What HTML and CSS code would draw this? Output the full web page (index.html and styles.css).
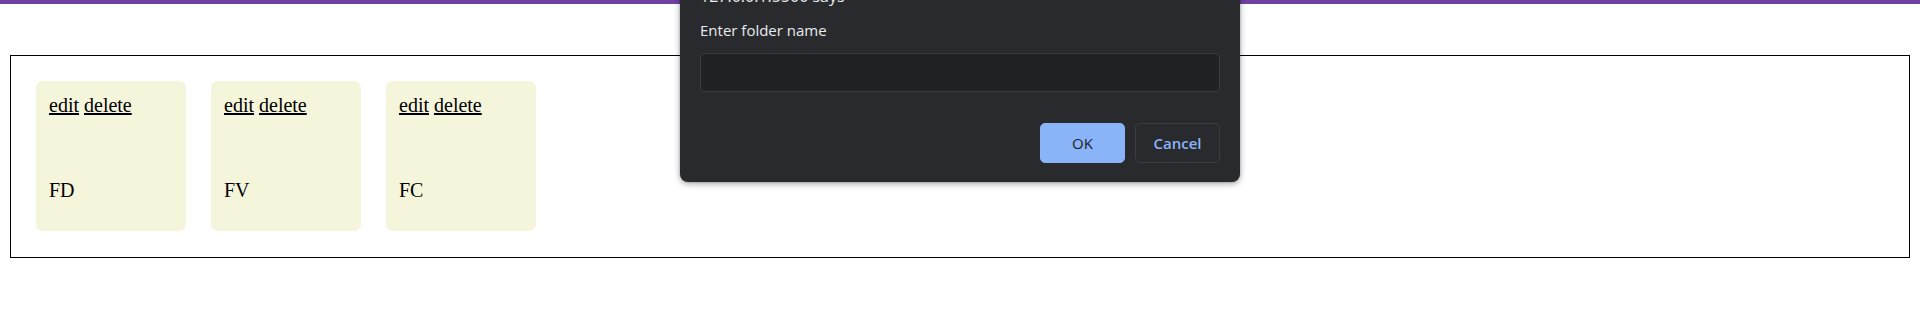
FILE: index.html
```html
<!DOCTYPE html>
<html>
<head>
<meta charset="utf-8">
<link rel="stylesheet" href="styles.css">
</head>
<body>
<div class="topbar"></div>
<div class="folders">
  <div class="card">
    <div class="actions"><a href="#">edit</a> <a href="#">delete</a></div>
    <div class="name">FD</div>
  </div>
  <div class="card">
    <div class="actions"><a href="#">edit</a> <a href="#">delete</a></div>
    <div class="name">FV</div>
  </div>
  <div class="card">
    <div class="actions"><a href="#">edit</a> <a href="#">delete</a></div>
    <div class="name">FC</div>
  </div>
</div>
<div class="dialog">
  <div class="dialog-title">127.0.0.1:5500 says</div>
  <div class="dialog-label">Enter folder name</div>
  <div class="dialog-input"></div>
  <div class="dialog-buttons">
    <button class="btn btn-ok">OK</button>
    <button class="btn btn-cancel">Cancel</button>
  </div>
</div>
</body>
</html>
```
FILE: styles.css
```css
html, body {
  margin: 0;
  padding: 0;
  background: #ffffff;
}
body {
  font-family: "Liberation Serif", "Times New Roman", serif;
  font-size: 20px;
  color: #000;
  position: relative;
  height: 311px;
  overflow: hidden;
}
.topbar {
  height: 4px;
  background: #6f42a1;
}
.folders {
  margin: 51px 10px 0;
  border: 1px solid #000;
  padding: 25px 25px 26px;
  display: flex;
  gap: 25px;
}
.card {
  width: 150px;
  height: 150px;
  box-sizing: border-box;
  padding: 13px 13px 12px;
  background: #f5f5dc;
  border-radius: 7px;
}
.actions a {
  color: #000;
  text-decoration: underline;
}
.name {
  margin-top: 62px;
}
.dialog {
  position: absolute;
  left: 680px;
  top: -34px;
  width: 560px;
  box-sizing: border-box;
  padding: 20px 20px 19px;
  background: #292a2d;
  border-radius: 0 0 8px 8px;
  box-shadow: 0 2px 6px rgba(0, 0, 0, 0.35), 0 0 2px rgba(0, 0, 0, 0.25);
  font-family: "Open Sans", "Noto Sans", sans-serif;
  color: #e8eaed;
  font-size: 15px;
  line-height: 20px;
}
.dialog-title {
  font-size: 16px;
  margin-bottom: 14px;
}
.dialog-label {
  margin-bottom: 13px;
}
.dialog-input {
  height: 39px;
  box-sizing: border-box;
  background: #202124;
  border: 1px solid #3b3c3f;
  border-radius: 4px;
}
.dialog-buttons {
  margin-top: 31px;
  display: flex;
  justify-content: flex-end;
  gap: 10px;
}
.btn {
  width: 85px;
  height: 40px;
  box-sizing: border-box;
  border-radius: 5px;
  font-family: "Open Sans", "Noto Sans", sans-serif;
  font-size: 15px;
  font-weight: 400;
  cursor: pointer;
}
.btn-ok {
  background: #8ab4f8;
  color: #202124;
  border: 1px solid #8ab4f8;
}
.btn-cancel {
  background: transparent;
  color: #8ab4f8;
  border: 1px solid #3c3d41;
  font-weight: 600;
}
```
